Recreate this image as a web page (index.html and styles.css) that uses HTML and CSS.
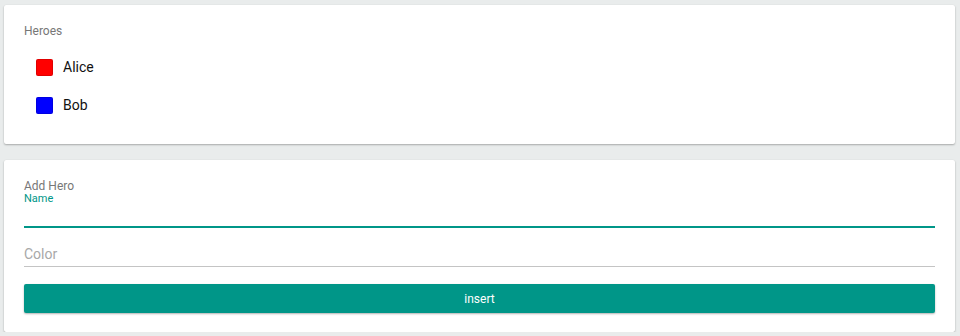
FILE: index.html
```html
<!DOCTYPE html>
<html>
<head>
<meta charset="utf-8">
<link rel="stylesheet" href="styles.css">
</head>
<body>
<div class="page">
  <section class="card heroes">
    <div class="card-title">Heroes</div>
    <ul class="hero-list">
      <li class="hero"><span class="swatch" style="background:#ff0000"></span><span class="hero-name">Alice</span></li>
      <li class="hero"><span class="swatch" style="background:#0000ff"></span><span class="hero-name">Bob</span></li>
    </ul>
  </section>
  <section class="card add">
    <div class="card-title">Add Hero</div>
    <div class="field focused">
      <label class="field-label">Name</label>
      <div class="field-input"></div>
    </div>
    <div class="field plain">
      <div class="field-input"><span class="placeholder">Color</span></div>
    </div>
    <button class="btn">insert</button>
  </section>
</div>
</body>
</html>
```

FILE: styles.css
```css
html, body {
  margin: 0;
  padding: 0;
  background: #e9ecec;
  font-family: Roboto, "Liberation Sans", sans-serif;
}
.page {
  padding: 5px 5px 0 4px;
  display: flex;
  flex-direction: column;
  gap: 16px;
}
.card {
  background: #fff;
  border-radius: 2px;
  box-shadow: 0 1px 2px rgba(0,0,0,0.28), 0 0 1px rgba(0,0,0,0.08);
}
.heroes {
  padding: 19px 20px 20px;
  height: 100px;
}
.card-title {
  font-size: 12px;
  line-height: 14px;
  color: #777;
}
.hero-list {
  list-style: none;
  margin: 10px 0 0;
  padding: 0 0 0 12px;
}
.hero {
  height: 38px;
  display: flex;
  align-items: center;
  gap: 10px;
}
.swatch {
  width: 17px;
  height: 17px;
  border-radius: 2px;
  box-shadow: inset 0 0 0 1px rgba(0,0,0,0.12);
}
.hero-name {
  font-size: 14px;
  color: #111;
}
.add {
  padding: 19px 20px 19px;
}
.field-label {
  display: block;
  font-size: 11px;
  line-height: 12px;
  color: #009688;
}
.focused .field-input {
  height: 21px;
  border-bottom: 2px solid #009688;
}
.plain {
  padding-top: 16px;
}
.plain .field-input {
  height: 22px;
  border-bottom: 1px solid #c4c4c4;
  display: flex;
  align-items: flex-start;
}
.placeholder {
  font-size: 14px;
  color: #a8a8a8;
  line-height: 20px;
}
.btn {
  display: block;
  width: 100%;
  margin-top: 17px;
  height: 29px;
  border: none;
  border-radius: 2px;
  background: #009688;
  color: #fff;
  font-family: Roboto, "Liberation Sans", sans-serif;
  font-size: 12px;
  box-shadow: 0 1px 2px rgba(0,0,0,0.3);
  padding: 0;
}
```
